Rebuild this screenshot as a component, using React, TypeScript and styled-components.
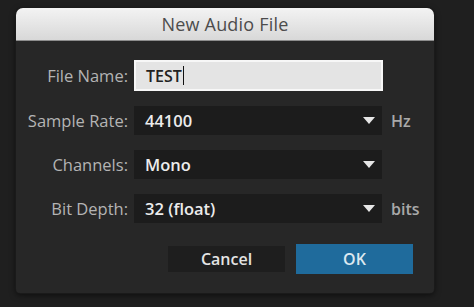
import { FC } from "react";
import styled, { createGlobalStyle } from "styled-components";

const GlobalStyle = createGlobalStyle`
	html, body {
		margin: 0;
		padding: 0;
		background: #1f1f1f;
		width: 474px;
		height: 307px;
		overflow: hidden;
	}
	body {
		font-family: "Open Sans", "Liberation Sans", sans-serif;
	}
`;

const Page = styled.div`
	width: 474px;
	height: 307px;
	padding: 8px 0 0 16px;
	box-sizing: border-box;
	background: #1f1f1f;
`;

const Dialog = styled.div`
	width: 418px;
	border-radius: 7px 7px 4px 4px;
	background: #272727;
	box-shadow: 0 0 0 1px #1a1a1a, 0 2px 6px rgba(0, 0, 0, 0.6);
	overflow: hidden;
`;

const TitleBar = styled.div`
	height: 33px;
	display: flex;
	align-items: center;
	justify-content: center;
	background: linear-gradient(#f3f3f3, #d8d8d8);
	border-bottom: 1px solid #8d8d8d;
	box-sizing: border-box;
	color: #4c4c4c;
	font-size: 18px;
	letter-spacing: 0.2px;
`;

const Body = styled.div`
	padding: 19px 0 19px 0;
`;

const Form = styled.div`
	display: grid;
	grid-template-columns: 112px 249px 44px;
	grid-template-rows: 31px 29px 29px 29px;
	column-gap: 6px;
	row-gap: 15px;
	align-items: center;
`;

const Label = styled.div`
	justify-self: end;
	color: #b4b4b4;
	font-size: 16.5px;
	font-weight: 500;
	white-space: nowrap;
`;

const Unit = styled.div`
	padding-left: 2px;
	color: #a9a9a9;
	font-size: 16px;
	font-weight: 600;
`;

const TextInput = styled.div`
	height: 31px;
	box-sizing: border-box;
	border: 2px solid #f7f7f7;
	background: #e4e4e4;
	display: flex;
	align-items: center;
	padding-left: 10px;
	color: #222;
	font-size: 16px;
	font-weight: 600;
`;

const Caret = styled.span`
	display: inline-block;
	width: 1px;
	height: 19px;
	margin-left: 1px;
	background: #111;
`;

const Select = styled.div`
	height: 29px;
	width: 248px;
	box-sizing: border-box;
	background: #1c1c1c;
	display: flex;
	align-items: center;
	justify-content: space-between;
	padding: 0 7px 0 11px;
	color: #ececec;
	font-size: 16.5px;
	font-weight: 600;
`;

const Arrow = styled.span`
	width: 0;
	height: 0;
	border-left: 6px solid transparent;
	border-right: 6px solid transparent;
	border-top: 7px solid #e6e6e6;
`;

const Buttons = styled.div`
	display: flex;
	justify-content: flex-end;
	align-items: center;
	gap: 11px;
	padding: 21px 21px 0 0;
`;

const Button = styled.div<{ $primary?: boolean }>`
	width: 117px;
	height: ${(p) => (p.$primary ? "30px" : "26px")};
	display: flex;
	align-items: center;
	justify-content: center;
	background: ${(p) => (p.$primary ? "#1f6b9c" : "#1e1e1e")};
	color: ${(p) => (p.$primary ? "#dce8f0" : "#e4e4e4")};
	font-size: 16px;
	font-weight: 600;
`;

interface DropdownProps {
	value: string;
}

const Dropdown: FC<DropdownProps> = ({ value }) => (
	<Select>
		<span>{value}</span>
		<Arrow />
	</Select>
);

const App: FC = () => {
	return (
		<>
			<GlobalStyle />
			<Page>
				<Dialog>
					<TitleBar>New Audio File</TitleBar>
					<Body>
						<Form>
							<Label>File Name:</Label>
							<TextInput>
								TEST
								<Caret />
							</TextInput>
							<span />

							<Label>Sample Rate:</Label>
							<Dropdown value="44100" />
							<Unit>Hz</Unit>

							<Label>Channels:</Label>
							<Dropdown value="Mono" />
							<span />

							<Label>Bit Depth:</Label>
							<Dropdown value="32 (float)" />
							<Unit>bits</Unit>
						</Form>
						<Buttons>
							<Button>Cancel</Button>
							<Button $primary>OK</Button>
						</Buttons>
					</Body>
				</Dialog>
			</Page>
		</>
	);
};

export default App;
